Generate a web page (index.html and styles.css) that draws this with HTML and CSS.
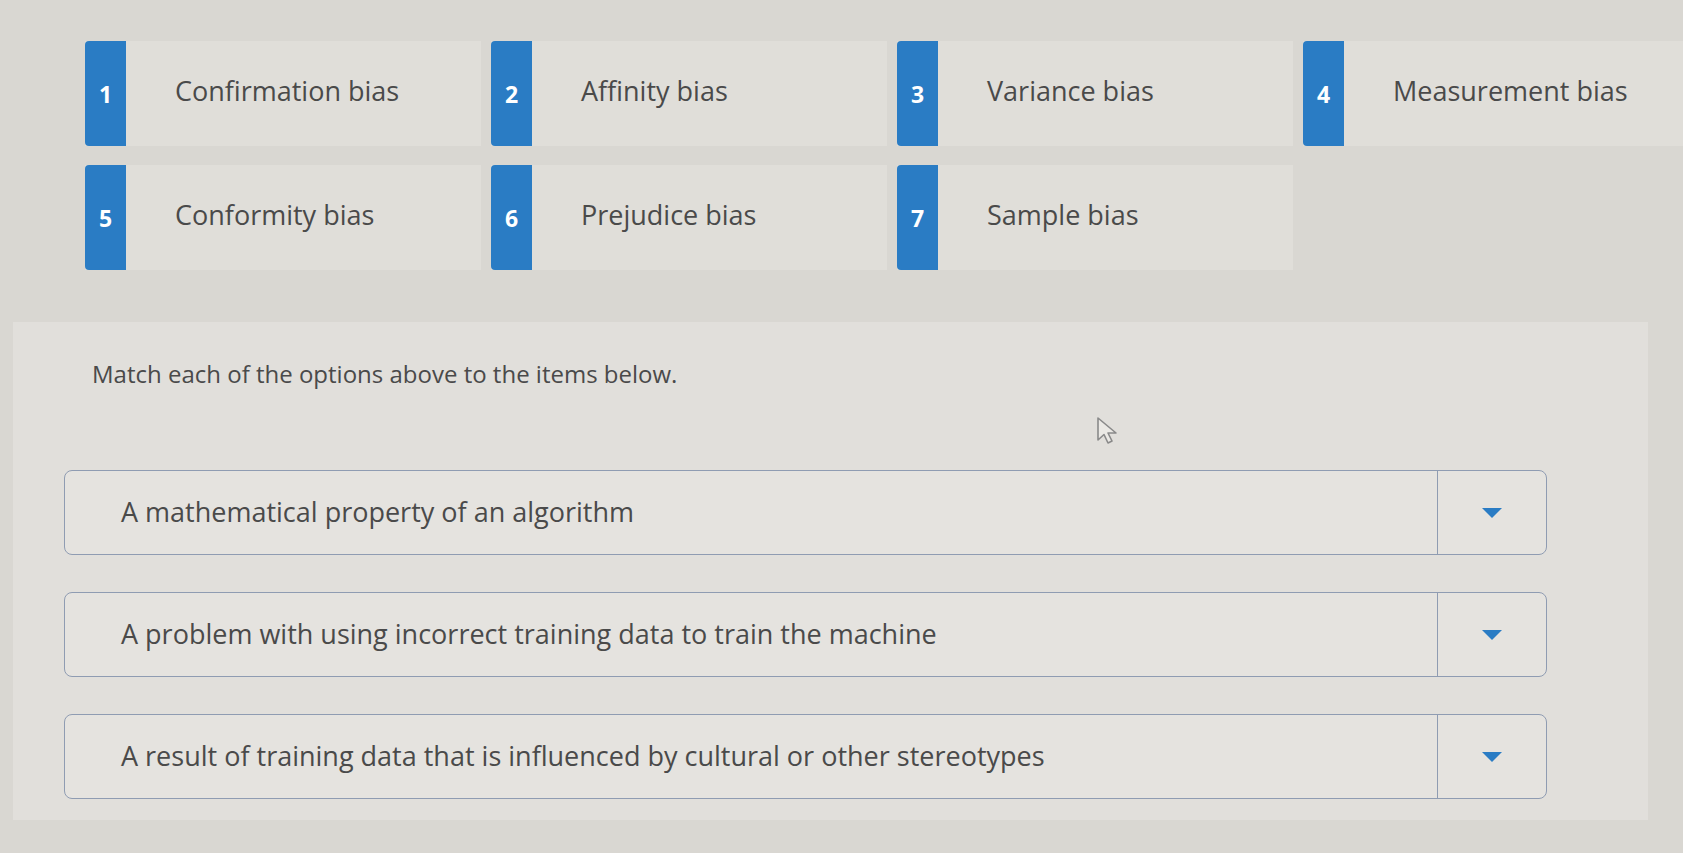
FILE: index.html
```html
<!DOCTYPE html>
<html lang="en">
<head>
    <meta charset="UTF-8">
    <title>Match each of the options</title>
    <link rel="stylesheet" href="styles.css">
</head>
<body>
    <section class="options">
        <div class="option"><span class="num">1</span><span class="label">Confirmation bias</span></div>
        <div class="option"><span class="num">2</span><span class="label">Affinity bias</span></div>
        <div class="option"><span class="num">3</span><span class="label">Variance bias</span></div>
        <div class="option"><span class="num">4</span><span class="label">Measurement bias</span></div>
        <div class="option"><span class="num">5</span><span class="label">Conformity bias</span></div>
        <div class="option"><span class="num">6</span><span class="label">Prejudice bias</span></div>
        <div class="option"><span class="num">7</span><span class="label">Sample bias</span></div>
    </section>

    <section class="panel">
        <p class="prompt">Match each of the options above to the items below.</p>

        <div class="match">
            <div class="item">A mathematical property of an algorithm</div>
            <div class="pick"><span class="caret"></span></div>
        </div>
        <div class="match">
            <div class="item">A problem with using incorrect training data to train the machine</div>
            <div class="pick"><span class="caret"></span></div>
        </div>
        <div class="match">
            <div class="item">A result of training data that is influenced by cultural or other stereotypes</div>
            <div class="pick"><span class="caret"></span></div>
        </div>

        <!-- mouse pointer left on the page -->
        <svg class="pointer" width="24" height="32" viewBox="0 0 24 32">
            <path d="M2 2 L2 24 L8 18.5 L12 27 L16 25 L12 17 L20 17 Z" fill="#ebe9e5" stroke="#8a8a8a" stroke-width="1.6" stroke-linejoin="round"/>
        </svg>
    </section>
</body>
</html>
```

FILE: styles.css
```css
body { margin: 0; background-color: #d9d7d2; font-family: "Open Sans", "Liberation Sans", Arial, sans-serif; color: #4a4a4a; }

/* Option cards at the top */
.options {
    display: grid;
    grid-template-columns: repeat(4, 396px);
    column-gap: 10px;
    row-gap: 19px;
    padding: 41px 0 0 85px;
}
.option { display: flex; height: 105px; background-color: #e0ded9; }
.num {
    width: 41px;
    flex-shrink: 0;
    display: flex;
    align-items: center;
    justify-content: center;
    background-color: #2a7cc4;
    border-radius: 4px 0 0 4px;
    color: #fff;
    font-weight: bold;
    font-size: 23px;
}
.label { display: flex; align-items: center; padding: 0 0 6px 49px; font-size: 27px; }

/* Matching panel */
.panel {
    position: relative;
    margin: 52px 35px 0 13px;
    padding: 37px 101px 21px 51px;
    background-color: #e1dfdb;
}
.prompt { margin: 0 0 81px 28px; font-size: 24px; line-height: 30px; }
.match {
    display: flex;
    box-sizing: border-box;
    height: 85px;
    margin-bottom: 37px;
    border: 1.5px solid #8f9cb2;
    border-radius: 8px;
    background-color: #e5e3df;
}
.match:last-of-type { margin-bottom: 0; }
.item { flex: 1; display: flex; align-items: center; padding: 0 0 3px 56px; font-size: 27px; }
.pick {
    width: 108px;
    display: flex;
    align-items: center;
    justify-content: center;
    border-left: 1.5px solid #8f9cb2;
}
.caret {
    width: 0;
    height: 0;
    border-left: 10px solid transparent;
    border-right: 10px solid transparent;
    border-top: 10px solid #2a7cc4;
}
.pointer { position: absolute; left: 1083px; top: 94px; }
```
